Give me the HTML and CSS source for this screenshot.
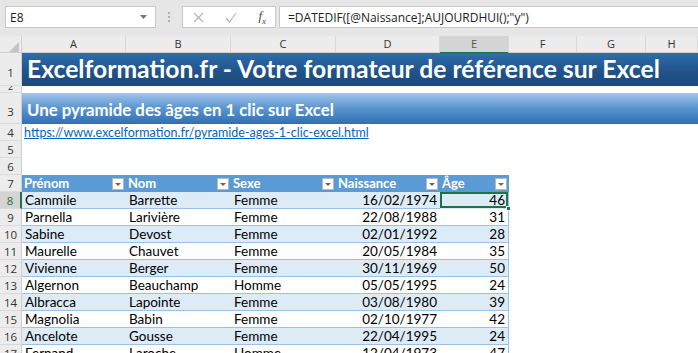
FILE: index.html
```html
<!DOCTYPE html>
<html lang="fr">
<head>
    <meta charset="UTF-8">
    <meta name="viewport" content="width=device-width, initial-scale=1.0">
    <title>Pyramide des âges</title>
    <link rel="stylesheet" href="styles.css">
</head>
<body>

<div class="app">
    <!-- Formula bar -->
    <div class="formula-bar">
        <div class="name-box">
            <span>E8</span>
            <svg class="caret" width="7" height="4" viewBox="0 0 7 4"><path d="M0 0h7L3.5 4z" fill="#777"/></svg>
        </div>
        <div class="grip"><i></i><i></i><i></i></div>
        <div class="fx-buttons">
            <svg width="11" height="11" viewBox="0 0 11 11"><path d="M1 1l9 9M10 1l-9 9" stroke="#b5b5b5" stroke-width="1.2"/></svg>
            <svg width="12" height="11" viewBox="0 0 12 11"><path d="M1 6l3.5 4L11 1" stroke="#b5b5b5" stroke-width="1.2" fill="none"/></svg>
            <span class="fx">f<sub>x</sub></span>
        </div>
        <div class="formula">=DATEDIF([@Naissance];AUJOURDHUI();"y")</div>
    </div>

    <!-- Sheet -->
    <div class="sheet">
        <div class="row col-heads">
            <div class="corner"><svg width="10" height="10" viewBox="0 0 10 10"><path d="M10 0v10H0z" fill="#c4c4c4"/></svg></div>
            <div class="ch">A</div>
            <div class="ch">B</div>
            <div class="ch">C</div>
            <div class="ch">D</div>
            <div class="ch active">E</div>
            <div class="ch">F</div>
            <div class="ch">G</div>
            <div class="ch">H</div>
        </div>

        <div class="row r-title">
            <div class="rh">1</div>
            <div class="banner title">Excelformation.fr - Votre formateur de référence sur Excel</div>
        </div>
        <div class="row r-gap">
            <div class="rh">2</div>
        </div>
        <div class="row r-sub">
            <div class="rh">3</div>
            <div class="banner subtitle">Une pyramide des âges en 1 clic sur Excel</div>
        </div>
        <div class="row">
            <div class="rh">4</div>
            <div class="cell link-cell"><a href="#">https://www.excelformation.fr/pyramide-ages-1-clic-excel.html</a></div>
        </div>
        <div class="row">
            <div class="rh">5</div>
        </div>
        <div class="row">
            <div class="rh">6</div>
        </div>
        <div class="row table-head">
            <div class="rh">7</div>
            <div class="th">Prénom<span class="filter"></span></div>
            <div class="th">Nom<span class="filter"></span></div>
            <div class="th">Sexe<span class="filter"></span></div>
            <div class="th">Naissance<span class="filter"></span></div>
            <div class="th">Âge<span class="filter"></span></div>
        </div>
        <div id="tableBody"></div>
    </div>
</div>

<script>
    const people = [
        ["Cammile", "Barrette", "Femme", "16/02/1974", 46],
        ["Parnella", "Larivière", "Femme", "22/08/1988", 31],
        ["Sabine", "Devost", "Femme", "02/01/1992", 28],
        ["Maurelle", "Chauvet", "Femme", "20/05/1984", 35],
        ["Vivienne", "Berger", "Femme", "30/11/1969", 50],
        ["Algernon", "Beauchamp", "Homme", "05/05/1995", 24],
        ["Albracca", "Lapointe", "Femme", "03/08/1980", 39],
        ["Magnolia", "Babin", "Femme", "02/10/1977", 42],
        ["Ancelote", "Gousse", "Femme", "22/04/1995", 24],
        ["Fernand", "Laroche", "Homme", "12/04/1973", 47]
    ];

    const tableBody = document.getElementById('tableBody');

    people.forEach((p, i) => {
        const rowNum = i + 8;
        const row = document.createElement('div');
        row.className = 'row data' + (i % 2 === 0 ? ' band' : '') + (rowNum === 8 ? ' current' : '');
        row.innerHTML = `
            <div class="rh">${rowNum}</div>
            <div class="td">${p[0]}</div>
            <div class="td">${p[1]}</div>
            <div class="td">${p[2]}</div>
            <div class="td num">${p[3]}</div>
            <div class="td num last${rowNum === 8 ? ' selected' : ''}">${p[4]}${rowNum === 8 ? '<span class="handle"></span>' : ''}</div>
        `;
        tableBody.appendChild(row);
    });
</script>

</body>
</html>
```

FILE: styles.css
```css
* {
    box-sizing: border-box;
    margin: 0;
    padding: 0;
}

body {
    font-family: 'Lato', 'Open Sans', sans-serif;
    background-color: #fff;
    color: #000;
    width: 698px;
    height: 353px;
    overflow: hidden;
}

/* ---------- formula bar ---------- */

.formula-bar {
    height: 36px;
    background-color: #e6e6e6;
    display: flex;
    align-items: flex-start;
    padding: 6px 0 0 5px;
    font-family: 'Open Sans', sans-serif;
    font-size: 12px;
    color: #222;
}

.name-box {
    width: 151px;
    height: 22px;
    background-color: #fff;
    border: 1px solid #c8c8c8;
    display: flex;
    align-items: center;
    justify-content: space-between;
    padding: 0 8px 0 4px;
}

.grip {
    width: 26px;
    height: 22px;
    display: flex;
    flex-direction: column;
    align-items: center;
    justify-content: center;
    gap: 2px;
}

.grip i {
    width: 2px;
    height: 2px;
    background-color: #b0b0b0;
}

.fx-buttons {
    width: 94px;
    height: 22px;
    background-color: #fff;
    border: 1px solid #c8c8c8;
    display: flex;
    align-items: center;
    justify-content: space-between;
    padding: 0 9px 0 10px;
}

.fx {
    font-family: 'Liberation Serif', serif;
    font-style: italic;
    font-size: 13px;
    color: #444;
}

.fx sub {
    font-size: 9px;
}

.formula {
    flex: 1;
    height: 22px;
    margin-left: 3px;
    background-color: #fff;
    border: 1px solid #c8c8c8;
    border-right: none;
    padding: 2px 0 0 8px;
    white-space: nowrap;
}

/* ---------- sheet grid ---------- */

.row {
    display: grid;
    grid-template-columns: 22px 104px 105px 105px 104px 69px 68px 69px 52px;
    height: 17px;
}

.col-heads {
    background-color: #ececec;
    border-bottom: 1px solid #cfcfcf;
    font-family: 'Open Sans', sans-serif;
    font-size: 11px;
    color: #333;
}

.corner {
    display: flex;
    align-items: flex-end;
    justify-content: flex-end;
    padding: 0 2px 2px 0;
    border-right: 1px solid #cfcfcf;
}

.ch {
    text-align: center;
    line-height: 16px;
    border-right: 1px solid #d8d8d8;
}

.ch.active {
    background-color: #d4d4d4;
    border-bottom: 2px solid #217346;
    color: #555;
}

.rh {
    grid-column: 1;
    background-color: #ececec;
    border-right: 1px solid #cfcfcf;
    border-bottom: 1px solid #dadada;
    font-family: 'Open Sans', sans-serif;
    font-size: 11.5px;
    color: #333;
    text-align: center;
    line-height: 17px;
    overflow: hidden;
}

.r-title {
    height: 33px;
}

.r-title .rh {
    line-height: 40px;
}

.r-gap {
    height: 7px;
}

.r-gap .rh {
    line-height: 0;
    font-size: 9px;
    padding-top: 1px;
}

.r-sub {
    height: 31px;
}

.r-sub .rh {
    line-height: 38px;
}

.banner {
    grid-column: 2 / -1;
    color: #fff;
    font-weight: bold;
    white-space: nowrap;
    padding-left: 5px;
    overflow: hidden;
}

.title {
    background: linear-gradient(#2e6dad, #1f5187 60%, #1d4a7a);
    font-size: 24.7px;
    line-height: 32px;
}

.subtitle {
    background: linear-gradient(#a3c6ea, #5f98d1 45%, #2f6fb6);
    font-size: 16.8px;
    line-height: 33px;
}

.cell {
    grid-column: 2 / -1;
    font-size: 12.5px;
    line-height: 17px;
    padding-left: 2px;
    white-space: nowrap;
}

.link-cell a {
    color: #0563c1;
}

/* ---------- table ---------- */

.th {
    background-color: #5b9bd5;
    color: #fff;
    font-weight: bold;
    font-size: 13px;
    line-height: 17px;
    padding: 0 2px;
    display: flex;
    justify-content: space-between;
    align-items: center;
}

.filter {
    width: 12px;
    height: 12px;
    background-color: #fff;
    border: 1px solid #b8b8b8;
    position: relative;
}

.filter::after {
    content: "";
    position: absolute;
    left: 2px;
    top: 4px;
    border-left: 3px solid transparent;
    border-right: 3px solid transparent;
    border-top: 3px solid #666;
}

.td {
    font-size: 13.5px;
    line-height: 16px;
    padding: 0 3px;
    white-space: nowrap;
    border-bottom: 1px solid #9bc2e6;
    background-color: #fff;
}

.band .td {
    background-color: #ddebf7;
}

.td.num {
    text-align: right;
}

.td.last {
    border-right: 1px solid #9bc2e6;
}

.current .rh {
    background-color: #d4d4d4;
    color: #217346;
    border-right: 2px solid #217346;
}

.td.selected {
    position: relative;
    box-shadow: inset 0 0 0 2px #217346;
    border-bottom-color: transparent;
}

.handle {
    position: absolute;
    right: -3px;
    bottom: -3px;
    width: 5px;
    height: 5px;
    background-color: #217346;
    border: 1px solid #fff;
}
```
